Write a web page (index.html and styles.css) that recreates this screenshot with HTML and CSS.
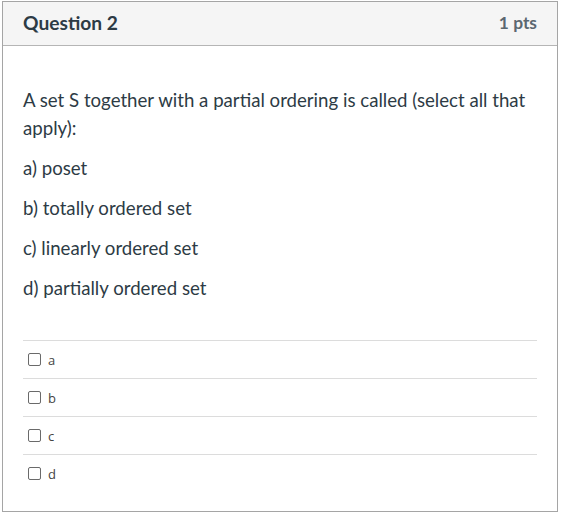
FILE: index.html
```html
<!DOCTYPE html>
<html>
<head>
<meta charset="utf-8">
<link rel="stylesheet" href="styles.css">
</head>
<body>
<div class="question">
  <div class="header">
    <span class="title">Question 2</span>
    <span class="pts">1 pts</span>
  </div>
  <div class="content">
    <div class="text">
      <p>A set S together with a partial ordering is called (select all that apply):</p>
      <p>a) poset</p>
      <p>b) totally ordered set</p>
      <p>c) linearly ordered set</p>
      <p>d) partially ordered set</p>
    </div>
    <div class="answers">
      <label class="answer"><span class="box"></span><span class="lbl">a</span></label>
      <label class="answer"><span class="box"></span><span class="lbl">b</span></label>
      <label class="answer"><span class="box"></span><span class="lbl">c</span></label>
      <label class="answer"><span class="box"></span><span class="lbl">d</span></label>
    </div>
  </div>
</div>
</body>
</html>
```

FILE: styles.css
```css
html, body {
  margin: 0;
  padding: 0;
  background: #fff;
}
body {
  padding: 1px 0 0 2px;
  font-family: Lato, "Open Sans", sans-serif;
  color: #2d3b45;
}
.question {
  width: 554px;
  height: 509px;
  border: 1px solid #a5a5a5;
  box-sizing: content-box;
}
.header {
  display: flex;
  justify-content: space-between;
  align-items: center;
  height: 40px;
  padding: 0 20px 3px 20px;
  background: #f5f5f5;
  border-bottom: 1px solid #b5b5b5;
}
.title {
  font-size: 19.2px;
  font-weight: 700;
  color: #2d3b45;
}
.pts {
  font-size: 17.4px;
  font-weight: 700;
  color: #5b6770;
}
.content {
  padding: 40px 20px 0 20px;
}
.text {
  font-size: 18.65px;
  line-height: 28px;
}
.text p {
  margin: 0 0 12px 0;
}
.answers {
  margin-top: 38px;
}
.answer {
  display: flex;
  align-items: center;
  height: 37px;
  border-top: 1px solid #dcdcdc;
  padding-left: 5px;
  gap: 7px;
}
.box {
  width: 11px;
  height: 11px;
  border: 1px solid #6a6a6a;
  border-radius: 2px;
  background: #fff;
}
.lbl {
  font-family: "Open Sans", sans-serif;
  font-size: 13px;
  color: #444;
}
```
